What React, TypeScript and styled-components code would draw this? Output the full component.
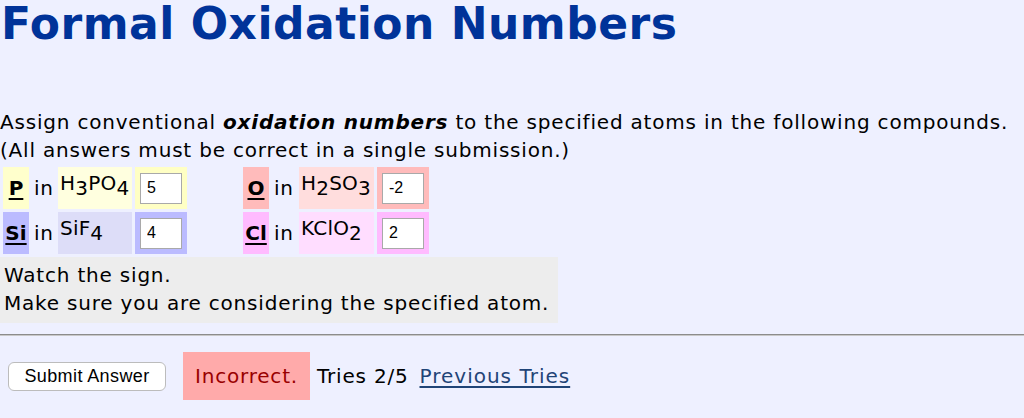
import React from "react";
import styled, { createGlobalStyle } from "styled-components";

const GlobalStyle = createGlobalStyle`
  html, body {
    margin: 0;
    padding: 0;
    background: #eef0ff;
  }
  body {
    font-family: "DejaVu Sans", Verdana, sans-serif;
    letter-spacing: 0.8px;
    color: #000;
  }
`;

interface Question {
  atom: string;
  formula: React.ReactNode;
  answer: string;
  tone: "yellow" | "blue" | "red" | "pink";
}

const tones = {
  yellow: { atom: "#ffffcc", formula: "#ffffdf", input: "#ffffc4" },
  blue: { atom: "#bbbbff", formula: "#ddddf8", input: "#bbbbff" },
  red: { atom: "#ffbbbb", formula: "#ffdddd", input: "#ffbbbb" },
  pink: { atom: "#ffbbff", formula: "#ffddff", input: "#ffbbff" },
};

const questions: Question[] = [
  { atom: "P", formula: <>H<Sub>3</Sub>PO<Sub>4</Sub></>, answer: "5", tone: "yellow" },
  { atom: "O", formula: <>H<Sub>2</Sub>SO<Sub>3</Sub></>, answer: "-2", tone: "red" },
  { atom: "Si", formula: <>SiF<Sub>4</Sub></>, answer: "4", tone: "blue" },
  { atom: "Cl", formula: <>KClO<Sub>2</Sub></>, answer: "2", tone: "pink" },
];

function Sub({ children }: { children: React.ReactNode }) {
  return <ScSub>{children}</ScSub>;
}

export default function App() {
  return (
    <>
      <GlobalStyle />
      <ScTitle>Formal Oxidation Numbers</ScTitle>

      <ScIntro>
        Assign conventional <em>oxidation numbers</em> to the specified atoms in the
        following compounds.
        <br />
        (All answers must be correct in a single submission.)
      </ScIntro>

      <ScGrid>
        {questions.map((q, i) => (
          <React.Fragment key={q.atom}>
            <ScAtom $bg={tones[q.tone].atom}>
              <span>{q.atom}</span>
            </ScAtom>
            <ScIn>in</ScIn>
            <ScFormula $bg={tones[q.tone].formula}>{q.formula}</ScFormula>
            <ScInputCell $bg={tones[q.tone].input}>
              <ScInput defaultValue={q.answer} />
            </ScInputCell>
            {i % 2 === 0 && <div />}
          </React.Fragment>
        ))}
      </ScGrid>

      <ScHint>
        Watch the sign.
        <br />
        Make sure you are considering the specified atom.
      </ScHint>

      <ScRule />

      <ScFooter>
        <ScButton type="button">Submit Answer</ScButton>
        <ScIncorrect>Incorrect.</ScIncorrect>
        <ScTries>Tries 2/5</ScTries>
        <ScLink href="#">Previous Tries</ScLink>
      </ScFooter>
    </>
  );
}

const ScTitle = styled.h1`
  margin: 0;
  padding: 0 0 0 1px;
  font-family: "DejaVu Sans", Verdana, sans-serif;
  font-size: 44px;
  line-height: 48px;
  font-weight: bold;
  color: #003399;
  letter-spacing: 0.5px;
  white-space: nowrap;
`;

const ScIntro = styled.p`
  margin: 60px 0 0;
  font-size: 20px;
  line-height: 28px;

  em {
    font-weight: bold;
    font-style: italic;
  }
`;

const ScGrid = styled.div`
  display: grid;
  grid-template-columns: 26px 23px 74px 52px 50px 26px 24px 75px 52px;
  grid-auto-rows: 42px;
  gap: 3px;
  padding: 3px;
  width: max-content;
`;

const ScAtom = styled.div<{ $bg: string }>`
  background: ${(p) => p.$bg};
  display: flex;
  align-items: center;
  justify-content: center;
  font-size: 20px;
  font-weight: bold;
  letter-spacing: 0;

  span {
    text-decoration: underline;
    text-underline-offset: 3px;
    text-decoration-thickness: 2px;
  }
`;

const ScIn = styled.div`
  display: flex;
  align-items: center;
  padding-left: 2px;
  font-size: 20px;
  white-space: nowrap;
`;

const ScFormula = styled.div<{ $bg: string }>`
  background: ${(p) => p.$bg};
  display: flex;
  align-items: flex-start;
  padding: 4px 0 0 2px;
  font-size: 20px;
  letter-spacing: 0.2px;
  white-space: nowrap;
`;

const ScSub = styled.span`
  font-size: 20px;
  position: relative;
  top: 5px;
`;

const ScInputCell = styled.div<{ $bg: string }>`
  background: ${(p) => p.$bg};
  display: flex;
  align-items: center;
  justify-content: center;
`;

const ScInput = styled.input`
  box-sizing: border-box;
  width: 42px;
  height: 31px;
  margin: 0;
  padding: 0 6px;
  border: 1px solid #a9a9a9;
  background: #fff;
  font-family: "Liberation Sans", Arial, sans-serif;
  font-size: 16px;
  letter-spacing: 0;
  color: #000;
  outline: none;
`;

const ScHint = styled.div`
  width: max-content;
  padding: 4px 9px 6px 4px;
  background: #ededed;
  font-size: 20px;
  line-height: 28px;
`;

const ScRule = styled.hr`
  margin: 11px 0 0;
  border: none;
  border-top: 1px solid #8c8c8c;
  border-bottom: 1px solid #c8c8c8;
  height: 0;
`;

const ScFooter = styled.div`
  display: flex;
  align-items: center;
  padding: 16px 0 0 8px;
  font-size: 20px;
`;

const ScButton = styled.button`
  height: 29px;
  width: 158px;
  padding: 0;
  background: #fff;
  border: 1px solid #bcbcbc;
  border-radius: 6px;
  font-family: "Liberation Sans", Arial, sans-serif;
  font-size: 18px;
  letter-spacing: 0.4px;
  color: #000;
`;

const ScIncorrect = styled.div`
  margin-left: 17px;
  height: 48px;
  display: flex;
  align-items: center;
  padding: 0 12px;
  background: #ffaaaa;
  color: #990000;
`;

const ScTries = styled.span`
  margin-left: 7px;
`;

const ScLink = styled.a`
  margin-left: 11px;
  color: #1f4477;
  letter-spacing: 1px;
  text-decoration: underline;
  text-underline-offset: 3px;
`;
